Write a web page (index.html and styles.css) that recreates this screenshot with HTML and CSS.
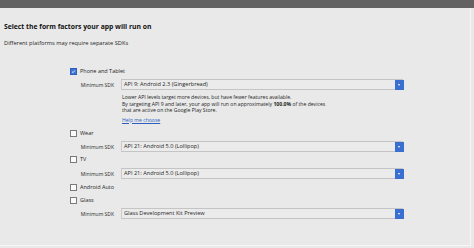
FILE: index.html
```html
<!DOCTYPE html>
<html lang="en">

<head>
    <meta charset="UTF-8">
    <title>Target Android Devices</title>
    <link rel="stylesheet" href="styles.css">
</head>

<body>
    <div class="topbar"></div>

    <div class="panel">
        <h1 class="title">Select the form factors your app will run on</h1>
        <p class="subtitle">Different platforms may require separate SDKs</p>

        <div class="factors">
            <div class="factor factor-phone">
                <label class="check-row">
                    <span class="box checked">
                        <svg viewBox="0 0 8 8" width="7" height="7"><path d="M1.6 4.2 L3.3 5.8 L6.4 2.3" fill="none" stroke="#fff" stroke-width="1.3"/></svg>
                    </span>
                    Phone and Tablet
                </label>
                <div class="sdk-row">
                    <span class="sdk-label">Minimum SDK</span>
                    <div class="select">
                        <span class="select-text">API 9: Android 2.3 (Gingerbread)</span>
                        <span class="select-btn"></span>
                    </div>
                </div>
                <div class="notes">
                    <p class="note-first">Lower API levels target more devices, but have fewer features available.</p>
                    <p>By targeting API 9 and later, your app will run on approximately <b>100.0%</b> of the devices<br>that are active on the Google Play Store.</p>
                    <a class="help" href="#">Help me choose</a>
                </div>
            </div>

            <div class="factor factor-wear">
                <label class="check-row"><span class="box"></span>Wear</label>
                <div class="sdk-row">
                    <span class="sdk-label">Minimum SDK</span>
                    <div class="select">
                        <span class="select-text">API 21: Android 5.0 (Lollipop)</span>
                        <span class="select-btn"></span>
                    </div>
                </div>
            </div>

            <div class="factor factor-tv">
                <label class="check-row"><span class="box"></span>TV</label>
                <div class="sdk-row sdk-row-tv">
                    <span class="sdk-label">Minimum SDK</span>
                    <div class="select">
                        <span class="select-text">API 21: Android 5.0 (Lollipop)</span>
                        <span class="select-btn"></span>
                    </div>
                </div>
            </div>

            <div class="factor factor-auto">
                <label class="check-row"><span class="box"></span>Android Auto</label>
            </div>

            <div class="factor factor-glass">
                <label class="check-row"><span class="box"></span>Glass</label>
                <div class="sdk-row">
                    <span class="sdk-label">Minimum SDK</span>
                    <div class="select">
                        <span class="select-text">Glass Development Kit Preview</span>
                        <span class="select-btn"></span>
                    </div>
                </div>
            </div>
        </div>
    </div>
</body>

</html>
```

FILE: styles.css
```css
body {
    margin: 0;
    padding: 0;
    width: 474px;
    height: 248px;
    overflow: hidden;
    background: #e9e9e9;
    color: #1e1e1e;
    font-family: 'Open Sans', 'Noto Sans', sans-serif;
    font-size: 5.6px;
}

.topbar {
    height: 8px;
    background: #626262;
}

.panel {
    height: 238px;
    width: 471px;
    border-right: 1px solid #f6f6f6;
    border-bottom: 1px solid #f6f6f6;
    box-sizing: border-box;
    padding: 14px 0 0 4px;
}

.title {
    margin: 0;
    font-size: 6.8px;
    font-weight: 700;
    line-height: 10px;
    color: #111111;
}

.subtitle {
    margin: 7px 0 0 0;
    font-size: 5.7px;
    line-height: 8px;
}

.factors {
    margin: 20px 0 0 66px;
    display: flex;
    flex-direction: column;
}

.check-row {
    display: flex;
    align-items: center;
    gap: 3px;
    height: 8px;
    line-height: 8px;
    font-size: 5.5px;
    color: #1e1e1e;
}

.box {
    width: 7px;
    height: 7px;
    box-sizing: border-box;
    border: 1px solid #7a7a7a;
    background: #fbfbfb;
    display: flex;
    align-items: center;
    justify-content: center;
}

.box.checked {
    background: #3f74d4;
    border-color: #2f5fb8;
}

.box svg {
    display: block;
}

.sdk-row {
    display: flex;
    align-items: center;
    gap: 7px;
    margin-top: 4px;
}

.sdk-row-tv {
    margin-top: 5px;
}

.sdk-label {
    width: 44px;
    text-align: right;
    font-size: 5px;
    color: #2a2a2a;
}

.select {
    width: 282px;
    height: 11px;
    display: flex;
    align-items: center;
    border-top: 1px solid #c4c4c4;
    border-bottom: 1px solid #c4c4c4;
    border-left: 1px solid #cccccc;
    background: #ebebeb;
    box-sizing: border-box;
}

.select-text {
    flex: 1;
    padding-left: 2px;
    font-size: 5.6px;
    line-height: 9px;
}

.select-btn {
    width: 9px;
    height: 10px;
    margin-right: -1px;
    background: #3a6fd2;
    position: relative;
}

.select-btn::after {
    content: "";
    position: absolute;
    left: 3px;
    top: 4px;
    border-left: 1.5px solid transparent;
    border-right: 1.5px solid transparent;
    border-top: 2px solid #ffffff;
}

.notes {
    margin: 4px 0 0 52px;
    font-size: 5.1px;
}

.notes p {
    margin: 0;
    line-height: 6.5px;
}

.help {
    display: inline-block;
    margin-top: 3px;
    color: #2d5fc0;
    text-decoration: underline;
    line-height: 6.5px;
}

.factor-wear {
    margin-top: 6px;
}

.factor-tv {
    margin-top: 3px;
}

.factor-auto {
    margin-top: 4px;
}

.factor-glass {
    margin-top: 5px;
}
```
